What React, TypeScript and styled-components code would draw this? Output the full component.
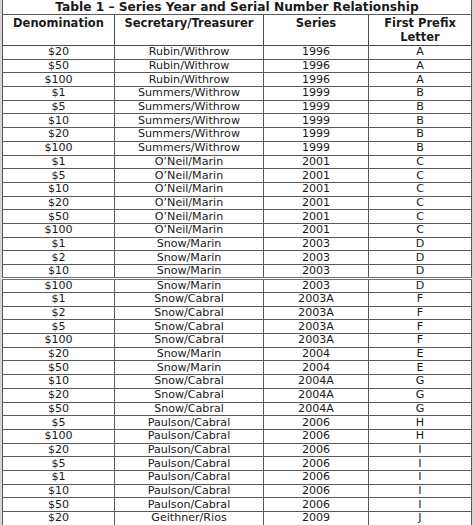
import React from 'react'
import styled, { createGlobalStyle } from 'styled-components'

const GlobalStyle = createGlobalStyle`
  html, body {
    margin: 0;
    padding: 0;
    background: #d6d6d6;
  }
`

const Page = styled.div`
  width: 474px;
  height: 525px;
  overflow: hidden;
  padding-left: 2px;
  box-sizing: border-box;
  font-family: 'DejaVu Sans', Verdana, sans-serif;
  color: #1a1a1a;
`

const Table = styled.table`
  width: 469px;
  table-layout: fixed;
  border-collapse: collapse;
  background: #ffffff;
`

const TitleCell = styled.th`
  height: 14px;
  padding: 0;
  font-size: 12.2px;
  line-height: 14px;
  font-weight: 700;
  text-align: center;
  border: 1px solid #5a5a5a;
  border-top: none;
  white-space: nowrap;
`

const HeadCell = styled.th`
  height: 29px;
  padding: 1px 0 0;
  font-size: 11.5px;
  line-height: 14px;
  font-weight: 700;
  text-align: center;
  vertical-align: top;
  border: 1px solid #4a4a4a;
`

const Row = styled.tr<{ $break?: boolean }>`
  height: 13.7px;

  & > td {
    border-top: ${({ $break }) => ($break ? '3px double #6e6e6e' : '1px solid #5a5a5a')};
  }
`

const Cell = styled.td`
  padding: 0;
  font-size: 11.1px;
  line-height: 12px;
  text-align: center;
  vertical-align: middle;
  border-left: 1px solid #5a5a5a;
  border-right: 1px solid #5a5a5a;
  border-bottom: 1px solid #5a5a5a;
  white-space: nowrap;
`

type Note = [string, string, string, string]

const notes: Note[] = [
  ['$20', 'Rubin/Withrow', '1996', 'A'],
  ['$50', 'Rubin/Withrow', '1996', 'A'],
  ['$100', 'Rubin/Withrow', '1996', 'A'],
  ['$1', 'Summers/Withrow', '1999', 'B'],
  ['$5', 'Summers/Withrow', '1999', 'B'],
  ['$10', 'Summers/Withrow', '1999', 'B'],
  ['$20', 'Summers/Withrow', '1999', 'B'],
  ['$100', 'Summers/Withrow', '1999', 'B'],
  ['$1', 'O\u2019Neil/Marin', '2001', 'C'],
  ['$5', 'O\u2019Neil/Marin', '2001', 'C'],
  ['$10', 'O\u2019Neil/Marin', '2001', 'C'],
  ['$20', 'O\u2019Neil/Marin', '2001', 'C'],
  ['$50', 'O\u2019Neil/Marin', '2001', 'C'],
  ['$100', 'O\u2019Neil/Marin', '2001', 'C'],
  ['$1', 'Snow/Marin', '2003', 'D'],
  ['$2', 'Snow/Marin', '2003', 'D'],
  ['$10', 'Snow/Marin', '2003', 'D'],
  ['$100', 'Snow/Marin', '2003', 'D'],
  ['$1', 'Snow/Cabral', '2003A', 'F'],
  ['$2', 'Snow/Cabral', '2003A', 'F'],
  ['$5', 'Snow/Cabral', '2003A', 'F'],
  ['$100', 'Snow/Cabral', '2003A', 'F'],
  ['$20', 'Snow/Marin', '2004', 'E'],
  ['$50', 'Snow/Marin', '2004', 'E'],
  ['$10', 'Snow/Cabral', '2004A', 'G'],
  ['$20', 'Snow/Cabral', '2004A', 'G'],
  ['$50', 'Snow/Cabral', '2004A', 'G'],
  ['$5', 'Paulson/Cabral', '2006', 'H'],
  ['$100', 'Paulson/Cabral', '2006', 'H'],
  ['$20', 'Paulson/Cabral', '2006', 'I'],
  ['$5', 'Paulson/Cabral', '2006', 'I'],
  ['$1', 'Paulson/Cabral', '2006', 'I'],
  ['$10', 'Paulson/Cabral', '2006', 'I'],
  ['$50', 'Paulson/Cabral', '2006', 'I'],
  ['$20', 'Geithner/Rios', '2009', 'J'],
]

// the source table is split across two pages after the 17th row
const BREAK_AT = 17

const App = () => (
  <>
    <GlobalStyle />
    <Page>
      <Table>
        <colgroup>
          <col style={{ width: 112 }} />
          <col style={{ width: 149 }} />
          <col style={{ width: 105 }} />
          <col style={{ width: 103 }} />
        </colgroup>
        <thead>
          <tr>
            <TitleCell colSpan={4}>Table 1 – Series Year and Serial Number Relationship</TitleCell>
          </tr>
          <tr>
            <HeadCell>Denomination</HeadCell>
            <HeadCell>Secretary/Treasurer</HeadCell>
            <HeadCell>Series</HeadCell>
            <HeadCell>
              First Prefix
              <br />
              Letter
            </HeadCell>
          </tr>
        </thead>
        <tbody>
          {notes.map(([denom, names, series, letter], i) => (
            <Row key={i} $break={i === BREAK_AT}>
              <Cell>{denom}</Cell>
              <Cell>{names}</Cell>
              <Cell>{series}</Cell>
              <Cell>{letter}</Cell>
            </Row>
          ))}
        </tbody>
      </Table>
    </Page>
  </>
)

export default App
